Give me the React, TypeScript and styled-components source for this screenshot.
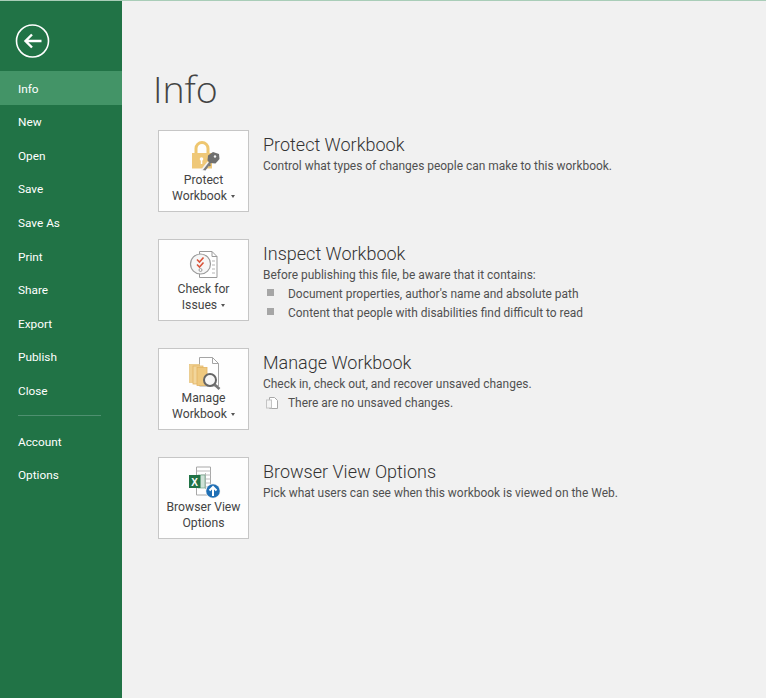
import React from "react";
import styled, { createGlobalStyle } from "styled-components";

const Global = createGlobalStyle`
  html, body { margin: 0; padding: 0; background: #f1f1f1; }
  body { font-family: Roboto, "Open Sans", "Liberation Sans", sans-serif; }
  * { box-sizing: border-box; }
`;

const Page = styled.div`
  display: flex;
  width: 766px;
  height: 698px;
  overflow: hidden;
  background: #f1f1f1;
  border-top: 1px solid #a9cdb8;
`;

const Sidebar = styled.nav`
  width: 122px;
  flex: none;
  background: #217346;
  padding-top: 23px;
  display: flex;
  flex-direction: column;
`;

const BackButton = styled.div`
  margin-left: 15px;
  width: 35px;
  height: 35px;
  margin-bottom: 12px;
`;

const NavItem = styled.div<{ $active?: boolean }>`
  height: 33.6px;
  padding: 1.6px 0 0 18px;
  line-height: 33.6px;
  font-size: 11.8px;
  color: #ffffff;
  background: ${(p) => (p.$active ? "#439467" : "transparent")};
`;

const Divider = styled.div`
  height: 1px;
  width: 83px;
  margin: 8px 0 8px 18px;
  background: #4f9070;
`;

const Main = styled.main`
  flex: 1;
  padding: 62px 0 0 31px;
`;

const Title = styled.h1`
  margin: 0 0 16px;
  font-family: "Open Sans", sans-serif;
  font-size: 37.5px;
  line-height: 51px;
  font-weight: 300;
  color: #444444;
`;

const Sections = styled.div`
  display: flex;
  flex-direction: column;
  gap: 27px;
  padding-left: 5px;
`;

const Section = styled.section`
  display: flex;
  gap: 14px;
  height: 82px;
`;

const ActionButton = styled.div`
  width: 91px;
  height: 82px;
  flex: none;
  background: #fefefe;
  border: 1px solid #c6c6c6;
  display: flex;
  flex-direction: column;
  align-items: center;
  padding-top: 7px;
`;

const IconSlot = styled.div`
  width: 36px;
  height: 34px;
`;

const ButtonLabel = styled.div`
  font-size: 12.2px;
  line-height: 16px;
  color: #444444;
  text-align: center;
  white-space: nowrap;
`;

const Caret = styled.span`
  display: inline-block;
  width: 0;
  height: 0;
  margin-left: 4px;
  vertical-align: 2px;
  border-left: 2.5px solid transparent;
  border-right: 2.5px solid transparent;
  border-top: 3px solid #555555;
`;

const Details = styled.div`
  padding-top: 1.5px;
`;

const Heading = styled.h2`
  margin: 0 0 0.5px;
  font-size: 18px;
  line-height: 25px;
  font-weight: 300;
  color: #333333;
`;

const Text = styled.div`
  font-size: 11.95px;
  line-height: 18px;
  color: #505050;
  white-space: nowrap;
`;

const ListRow = styled.div`
  display: flex;
  align-items: center;
  height: 19px;
  font-size: 11.95px;
  color: #505050;
  white-space: nowrap;
`;

const Bullet = styled.span`
  width: 7px;
  height: 7px;
  margin: 0 14px 2px 4px;
  background: #a6a6a6;
  flex: none;
`;

const DocGlyph = styled.span`
  width: 14px;
  height: 14px;
  margin: 0 9px 0 2px;
  flex: none;
`;

const LockIcon = () => (
  <svg width="36" height="34" viewBox="0 0 36 34">
    <path d="M10 16V10.5a6 6 0 0 1 12 0V16" fill="none" stroke="#eec66f" strokeWidth="3" />
    <rect x="6" y="15" width="20" height="15.5" fill="#efc878" />
    <circle cx="15.5" cy="21" r="1.8" fill="#fff" />
    <rect x="14.8" y="21" width="1.5" height="5" fill="#fff" />
    <path d="M15.5 31l6-7.5 2.2 1.7-6 7.8-2.2-.5z" fill="#f1f1f1" />
    <path d="M17 32l6.5-8.5 1.6 1.2-1 1.5 1 .8-1.2 1.4-1-.6-3.4 4.6z" fill="#7b7b7b" />
    <path d="M21.5 22.5l.5-5 5-3.5 6 2 .5 5-4 4.5-5.5-.5z" fill="#6f6f6f" />
    <circle cx="29" cy="18.5" r="1.2" fill="#f4f4f4" />
  </svg>
);

const InspectIcon = () => (
  <svg width="36" height="34" viewBox="0 0 36 34">
    <path d="M13.5 4.5h12.5l5 5v21H13.5z" fill="#fff" stroke="#9a9a9a" />
    <path d="M26 4.5v5h5" fill="none" stroke="#9a9a9a" />
    <path d="M26 14h3M26 18h3M26 22h3M26 26h3" stroke="#b5b5b5" />
    <circle cx="14.5" cy="17" r="10" fill="#f6f6f6" stroke="#9b9b9b" strokeWidth="1.2" />
    <path d="M11 12.5l2.5 2.5 4-4.5M11 17.5l2.5 2.5 4-4.5" fill="none" stroke="#d9543a" strokeWidth="1.6" />
    <circle cx="14.5" cy="23" r="1.5" fill="none" stroke="#9a9a9a" />
  </svg>
);

const ManageIcon = () => (
  <svg width="36" height="34" viewBox="0 0 36 34">
    <path d="M13.5 1.5h13l6 6V30h-19z" fill="#fff" stroke="#a5a5a5" />
    <path d="M26.5 1.5v6h6" fill="none" stroke="#a5a5a5" />
    <rect x="3.5" y="8.5" width="10" height="18" fill="#f0cf8e" stroke="#e8c684" strokeWidth="0.8" />
    <rect x="7" y="10" width="10" height="18" fill="#f2d69c" stroke="#e3b564" strokeWidth="0.8" />
    <rect x="11" y="11.5" width="10" height="18" fill="#efc97f" stroke="#e3b564" strokeWidth="0.8" />
    <circle cx="24" cy="24" r="6" fill="#f7f7f7" stroke="#666" strokeWidth="2" />
    <path d="M28.5 28.5l5 4.5" stroke="#777" strokeWidth="2.6" />
  </svg>
);

const BrowserIcon = () => (
  <svg width="36" height="34" viewBox="0 0 36 34">
    <path d="M10.5 2h14v28h-14z" fill="#fff" stroke="#a8a8a8" />
    <path d="M10.5 6h14M15 10h9.5M15 14h9.5M15 18h9.5M15 22h9.5M19.5 8v16" stroke="#bdbdbd" />
    <rect x="12" y="10" width="7" height="13" fill="#cfe2d7" stroke="#5d9a78" strokeWidth="0.6" />
    <rect x="3" y="10" width="11.5" height="13" fill="#217346" />
    <text x="5.2" y="20.5" fontSize="10" fontWeight="700" fontFamily="Liberation Sans, sans-serif" fill="#fff">X</text>
    <circle cx="27" cy="26" r="7.5" fill="#f1f1f1" />
    <circle cx="27" cy="26" r="6.8" fill="#1f6fb5" />
    <path d="M27 31v-9M23.5 25.5L27 22l3.5 3.5" fill="none" stroke="#fff" strokeWidth="2" />
  </svg>
);

const nav = ["New", "Open", "Save", "Save As", "Print", "Share", "Export", "Publish", "Close"];

export default function App() {
  return (
    <>
      <Global />
      <Page>
        <Sidebar>
          <BackButton>
            <svg width="35" height="35" viewBox="0 0 35 35">
              <circle cx="17.5" cy="17" r="16" fill="none" stroke="#fff" strokeWidth="1.6" />
              <path d="M26.5 17h-16M17 10.5L10.5 17l6.5 6.5" fill="none" stroke="#fff" strokeWidth="2.4" />
            </svg>
          </BackButton>
          <NavItem $active>Info</NavItem>
          {nav.map((n) => (
            <NavItem key={n}>{n}</NavItem>
          ))}
          <Divider />
          <NavItem>Account</NavItem>
          <NavItem>Options</NavItem>
        </Sidebar>
        <Main>
          <Title>Info</Title>
          <Sections>
            <Section>
              <ActionButton>
                <IconSlot><LockIcon /></IconSlot>
                <ButtonLabel>Protect<br />Workbook<Caret /></ButtonLabel>
              </ActionButton>
              <Details>
                <Heading>Protect Workbook</Heading>
                <Text>Control what types of changes people can make to this workbook.</Text>
              </Details>
            </Section>
            <Section>
              <ActionButton>
                <IconSlot><InspectIcon /></IconSlot>
                <ButtonLabel>Check for<br />Issues<Caret /></ButtonLabel>
              </ActionButton>
              <Details>
                <Heading>Inspect Workbook</Heading>
                <Text>Before publishing this file, be aware that it contains:</Text>
                <ListRow><Bullet />Document properties, author's name and absolute path</ListRow>
                <ListRow><Bullet />Content that people with disabilities find difficult to read</ListRow>
              </Details>
            </Section>
            <Section>
              <ActionButton>
                <IconSlot><ManageIcon /></IconSlot>
                <ButtonLabel>Manage<br />Workbook<Caret /></ButtonLabel>
              </ActionButton>
              <Details>
                <Heading>Manage Workbook</Heading>
                <Text>Check in, check out, and recover unsaved changes.</Text>
                <ListRow>
                  <DocGlyph>
                    <svg width="14" height="14" viewBox="0 0 14 14">
                      <path d="M4.5 1.5h5l3 3v8h-8z" fill="#fff" stroke="#a8a8a8" />
                      <rect x="1.5" y="4" width="5" height="8" fill="#f4f4f4" stroke="#c4c4c4" />
                    </svg>
                  </DocGlyph>
                  There are no unsaved changes.
                </ListRow>
              </Details>
            </Section>
            <Section>
              <ActionButton>
                <IconSlot><BrowserIcon /></IconSlot>
                <ButtonLabel>Browser View<br />Options</ButtonLabel>
              </ActionButton>
              <Details>
                <Heading>Browser View Options</Heading>
                <Text>Pick what users can see when this workbook is viewed on the Web.</Text>
              </Details>
            </Section>
          </Sections>
        </Main>
      </Page>
    </>
  );
}
